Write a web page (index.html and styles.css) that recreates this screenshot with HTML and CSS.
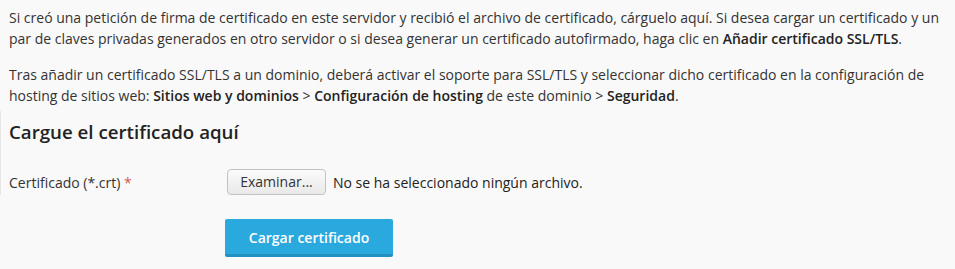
FILE: index.html
```html
<!DOCTYPE html>
<html lang="es">
<head>
<meta charset="utf-8">
<link rel="stylesheet" href="styles.css">
</head>
<body>
<div class="page">
  <p class="hint">Si creó una petición de firma de certificado en este servidor y recibió el archivo de certificado, cárguelo aquí. Si desea cargar un certificado y un par de claves privadas generados en otro servidor o si desea generar un certificado autofirmado, haga clic en <b>Añadir certificado SSL/TLS</b>.</p>
  <p class="hint last">Tras añadir un certificado SSL/TLS a un dominio, deberá activar el soporte para SSL/TLS y seleccionar dicho certificado en la configuración de hosting de sitios web: <b>Sitios web y dominios</b> &gt; <b>Configuración de hosting</b> de este dominio &gt; <b>Seguridad</b>.</p>
  <div class="section">
    <h2 class="section-title">Cargue el certificado aquí</h2>
    <div class="form-row">
      <label class="field-label">Certificado (*.crt) <span class="req">*</span></label>
      <div class="field">
        <span class="file-btn">Examinar...</span>
        <span class="file-name">No se ha seleccionado ningún archivo.</span>
      </div>
    </div>
  </div>
  <div class="actions">
    <button class="btn-primary" type="button">Cargar certificado</button>
  </div>
</div>
</body>
</html>
```
FILE: styles.css
```css
html, body {
  margin: 0;
  padding: 0;
  background: #f9f9f9;
}
body {
  font-family: "Open Sans", "Liberation Sans", sans-serif;
  font-size: 14px;
  color: #333;
}
.page {
  padding: 7px 9px 0 9px;
}
.hint {
  margin: 0 0 15px 0;
  line-height: 21px;
  width: 940px;
}
.hint.last {
  margin-bottom: 5px;
}
.hint b {
  font-weight: 600;
  color: #222;
}
.section {
  border-left: 1px solid #e6e6e6;
  margin-left: -9px;
  padding-left: 8px;
  padding-top: 9px;
}
.section-title {
  margin: 0;
  font-size: 18.7px;
  font-weight: 600;
  line-height: 24px;
  color: #222;
}
.form-row {
  display: flex;
  align-items: center;
  margin-top: 25px;
}
.field-label {
  width: 218px;
  flex: none;
  color: #333;
}
.req {
  color: #d9534f;
}
.field {
  display: flex;
  align-items: center;
  gap: 7px;
}
.file-btn {
  display: inline-block;
  box-sizing: border-box;
  width: 99px;
  height: 26px;
  line-height: 24px;
  text-align: center;
  border: 1px solid #c2c2c2;
  border-radius: 4px;
  background: linear-gradient(#fbfbfb, #e9e9e9);
  color: #333;
}
.file-name {
  color: #222;
}
.actions {
  padding-left: 216px;
  margin-top: 24px;
}
.btn-primary {
  box-sizing: border-box;
  width: 168px;
  height: 38px;
  border: 0;
  border-bottom: 3px solid #2291c2;
  border-radius: 2px;
  background: #2aa9de;
  color: #fff;
  font-family: "Open Sans", "Liberation Sans", sans-serif;
  font-size: 14px;
  font-weight: 600;
  padding: 1px 0 0 0;
}
```
